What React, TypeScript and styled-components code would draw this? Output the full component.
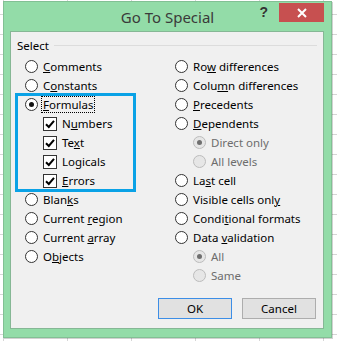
import styled, { createGlobalStyle } from 'styled-components';

const GlobalStyle = createGlobalStyle`
  html, body {
    margin: 0;
    padding: 0;
  }
  body {
    width: 337px;
    height: 341px;
    overflow: hidden;
    background-color: #fff;
    background-image:
      linear-gradient(to bottom, #d6d6d6 1px, transparent 1px),
      linear-gradient(to right, #d6d6d6 1px, transparent 1px);
    background-size: 100% 20px, 64px 100%;
    background-position: 0 14px, 3px 0;
    font-family: 'Noto Sans', 'Open Sans', sans-serif;
  }
`;

const Window = styled.div`
  box-sizing: border-box;
  margin: 1px 0 0 3px;
  width: 329px;
  height: 337px;
  border: 1px solid #82c094;
  background: #93dca8;
  box-shadow: 1px 1px 0 rgba(0, 0, 0, 0.18);
  display: flex;
  flex-direction: column;
  padding: 0 7px 8px 6px;
`;

const TitleBar = styled.div`
  margin: 0 -7px 0 -6px;
  height: 29px;
  display: grid;
  grid-template-columns: 1fr auto 1fr;
  align-items: center;
`;

const Title = styled.div`
  grid-column: 2;
  font-size: 15px;
  color: #3a3a3a;
  padding-top: 1px;
`;

const TitleButtons = styled.div`
  grid-column: 3;
  align-self: start;
  display: flex;
  justify-content: flex-end;
  align-items: flex-start;
  gap: 11px;
  padding-right: 7px;
`;

const Help = styled.span`
  font-family: 'Liberation Sans', sans-serif;
  font-weight: 700;
  font-size: 14px;
  color: #333;
  line-height: 21px;
`;

const Close = styled.div`
  margin-top: 1px;
  width: 45px;
  height: 19px;
  background: #c75050;
  display: flex;
  align-items: center;
  justify-content: center;
`;

const Panel = styled.div`
  flex: 1;
  background: #f0f0f0;
  border: 1px solid #86b795;
  padding-top: 5px;
  display: flex;
  flex-direction: column;
`;

const Legend = styled.div`
  height: 16px;
  display: flex;
  align-items: center;
  gap: 5px;
  padding: 0 6px 0 6px;
  font-size: 11.5px;
  color: #000;

  &::after {
    content: '';
    flex: 1;
    height: 1px;
    background: #dcdcdc;
  }
`;

const Columns = styled.div`
  margin-top: 4px;
  padding-left: 14px;
  display: grid;
  grid-template-columns: 150px 1fr;
`;

const Column = styled.div`
  display: flex;
  flex-direction: column;
`;

const Row = styled.div<{ $indent?: boolean; $disabled?: boolean }>`
  height: 19px;
  display: flex;
  align-items: center;
  gap: 5px;
  padding-left: ${(p) => (p.$indent ? '18px' : '0')};
  font-size: 11.5px;
  color: ${(p) => (p.$disabled ? '#6d6d6d' : '#000')};
  white-space: nowrap;
`;

const Highlight = styled.div`
  margin-left: -8px;
  padding-left: 8px;
  width: 117px;
  box-sizing: border-box;
  outline: 3px solid #0aa2e6;
  outline-offset: -1px;
`;

const Radio = styled.span<{ $checked?: boolean; $disabled?: boolean }>`
  box-sizing: border-box;
  flex: none;
  width: 13px;
  height: 13px;
  border-radius: 50%;
  border: 1px solid ${(p) => (p.$disabled ? '#bcbcbc' : '#333')};
  background: ${(p) => (p.$disabled ? '#e6e6e6' : '#fff')};
  display: flex;
  align-items: center;
  justify-content: center;

  &::after {
    content: '';
    display: ${(p) => (p.$checked ? 'block' : 'none')};
    width: 5px;
    height: 5px;
    border-radius: 50%;
    background: ${(p) => (p.$disabled ? '#6f6f6f' : '#111')};
  }
`;

const Check = styled.span`
  box-sizing: border-box;
  flex: none;
  width: 14px;
  height: 14px;
  border: 1px solid #333;
  background: #fff;
  display: flex;
  align-items: center;
  justify-content: center;
`;

const Focus = styled.span`
  outline: 1px dotted #000;
  padding: 0 1px;
  margin-left: -1px;
  line-height: 14px;
`;

const Buttons = styled.div`
  margin-top: 13px;
  padding-right: 7px;
  display: flex;
  justify-content: flex-end;
  gap: 10px;
`;

const Button = styled.button<{ $default?: boolean }>`
  box-sizing: border-box;
  width: 74px;
  height: 21px;
  margin: 0;
  padding: 0;
  border: 1px solid ${(p) => (p.$default ? '#3d8ee6' : '#adadad')};
  background: #e1e1e1;
  font-family: inherit;
  font-size: 11.5px;
  color: #000;
`;

const CheckMark = () => (
  <svg width="10" height="10" viewBox="0 0 10 10">
    <path d="M1 5.2 L3.8 8 L9 1.8" fill="none" stroke="#000" strokeWidth="2" />
  </svg>
);

type Item = { label: React.ReactNode; checked?: boolean; disabled?: boolean; indent?: boolean };

const RadioRow = ({ label, checked, disabled, indent }: Item) => (
  <Row $indent={indent} $disabled={disabled}>
    <Radio $checked={checked} $disabled={disabled} />
    <span>{label}</span>
  </Row>
);

const CheckRow = ({ label }: { label: React.ReactNode }) => (
  <Row $indent>
    <Check>
      <CheckMark />
    </Check>
    <span>{label}</span>
  </Row>
);

const rightItems: Item[] = [
  { label: <>Ro<u>w</u> differences</> },
  { label: <>Colu<u>m</u>n differences</> },
  { label: <><u>P</u>recedents</> },
  { label: <><u>D</u>ependents</> },
  { label: 'Direct only', checked: true, disabled: true, indent: true },
  { label: 'All levels', disabled: true, indent: true },
  { label: <>La<u>s</u>t cell</> },
  { label: <>Visible cells onl<u>y</u></> },
  { label: <>Condi<u>t</u>ional formats</> },
  { label: <>Data <u>v</u>alidation</> },
  { label: 'All', checked: true, disabled: true, indent: true },
  { label: 'Same', disabled: true, indent: true },
];

export default function App() {
  return (
    <>
      <GlobalStyle />
      <Window>
        <TitleBar>
          <Title>Go To Special</Title>
          <TitleButtons>
            <Help>?</Help>
            <Close>
              <svg width="10" height="10" viewBox="0 0 10 10">
                <path d="M1 1 L9 9 M9 1 L1 9" stroke="#fff" strokeWidth="2" />
              </svg>
            </Close>
          </TitleButtons>
        </TitleBar>
        <Panel>
          <Legend>Select</Legend>
          <Columns>
            <Column>
              <RadioRow label={<><u>C</u>omments</>} />
              <RadioRow label={<>C<u>o</u>nstants</>} />
              <Highlight>
                <RadioRow checked label={<Focus><u>F</u>ormulas</Focus>} />
                <CheckRow label={<>N<u>u</u>mbers</>} />
                <CheckRow label={<>Te<u>x</u>t</>} />
                <CheckRow label={<>Lo<u>g</u>icals</>} />
                <CheckRow label={<><u>E</u>rrors</>} />
              </Highlight>
              <RadioRow label={<>Blan<u>k</u>s</>} />
              <RadioRow label={<>Current <u>r</u>egion</>} />
              <RadioRow label={<>Current <u>a</u>rray</>} />
              <RadioRow label={<>O<u>b</u>jects</>} />
            </Column>
            <Column>
              {rightItems.map((item, i) => (
                <RadioRow key={i} {...item} />
              ))}
            </Column>
          </Columns>
          <Buttons>
            <Button $default>OK</Button>
            <Button>Cancel</Button>
          </Buttons>
        </Panel>
      </Window>
    </>
  );
}
